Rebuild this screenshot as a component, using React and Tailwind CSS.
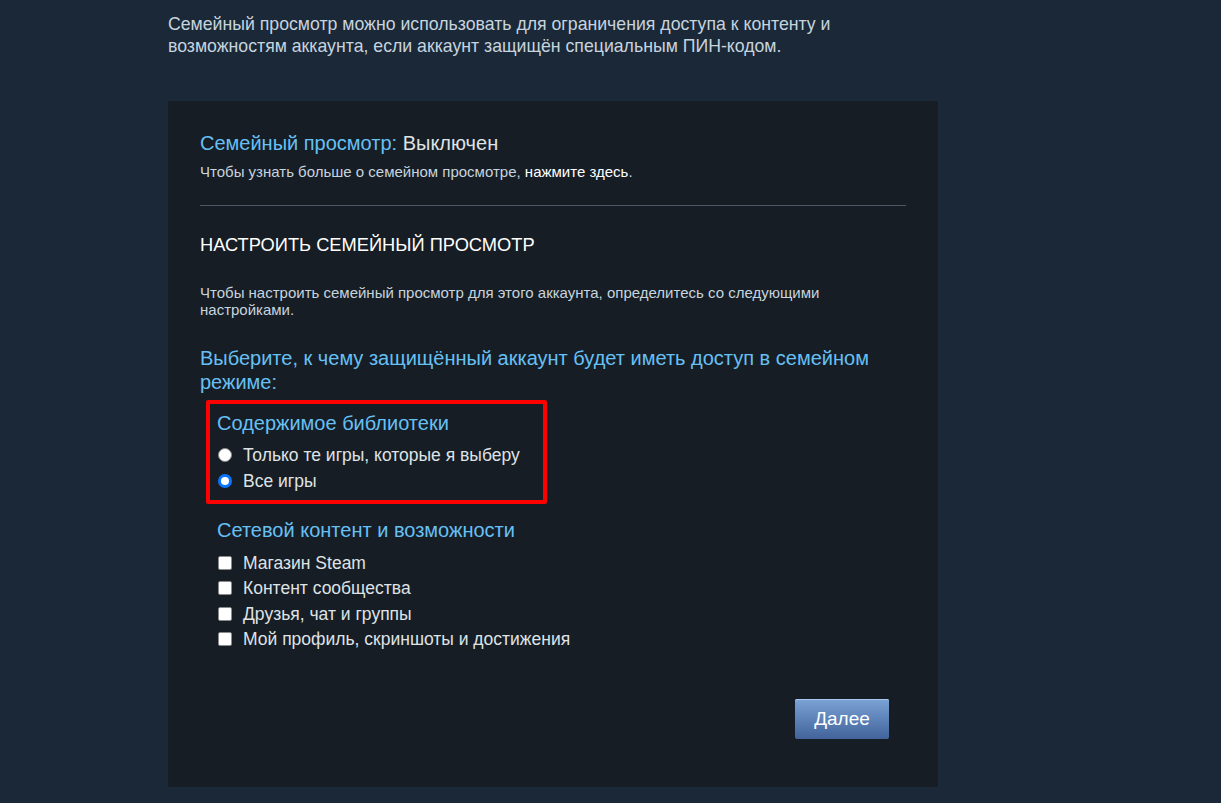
import React from "react";

const Radio = ({ checked, label }) => (
  <label className="flex items-center h-[26px] text-[17.5px] text-[#dfe3e6]">
    {checked ? (
      <span className="w-[14px] h-[14px] rounded-full bg-white border-[3px] border-[#0a75ff] ml-[1px] mr-[11px]" />
    ) : (
      <span className="w-[14px] h-[14px] rounded-full bg-white border border-[#8a8a8a] ml-[1px] mr-[11px]" />
    )}
    {label}
  </label>
);

const Check = ({ label }) => (
  <label className="flex items-center h-[25.5px] text-[17.5px] text-[#dfe3e6]">
    <span className="w-[14px] h-[14px] rounded-[2px] bg-white border border-[#8a8a8a] ml-[1px] mr-[11px]" />
    {label}
  </label>
);

export default function App() {
  return (
    <div className="min-h-[803px] bg-[#1b2838] font-['Liberation_Sans',Arial,sans-serif]">
      <div className="pl-[168px] pt-[13px]">
        <p className="w-[700px] text-[17.7px] leading-[22px] text-[#c6d4df]">
          Семейный просмотр можно использовать для ограничения доступа к контенту и
          возможностям аккаунта, если аккаунт защищён специальным ПИН-кодом.
        </p>

        <div className="mt-[44px] w-[770px] h-[686px] bg-[#171d25] px-[32px] pt-[30px]">
          <div className="text-[20px] leading-[24px]">
            <span className="text-[#66c0f4]">Семейный просмотр: </span>
            <span className="text-[#dfe3e6]">Выключен</span>
          </div>
          <p className="mt-[8px] text-[15px] leading-[18px] text-[#c6d4df]">
            Чтобы узнать больше о семейном просмотре, <span className="text-white">нажмите здесь</span>.
          </p>

          <div className="mt-[24px] h-px bg-[#4c5866]" />

          <h2 className="mt-[28px] text-[18.3px] leading-[22px] text-white uppercase">
            Настроить семейный просмотр
          </h2>

          <p className="mt-[28px] w-[660px] text-[15px] leading-[17px] text-[#c6d4df]">
            Чтобы настроить семейный просмотр для этого аккаунта, определитесь со следующими настройками.
          </p>

          <p className="mt-[28px] w-[690px] text-[20px] leading-[24px] text-[#66c0f4]">
            Выберите, к чему защищённый аккаунт будет иметь доступ в семейном режиме:
          </p>

          <div className="mt-[6px] ml-[6px] w-[341px] border-4 border-[#ff0000] rounded-[2px] pl-[7px] pt-[7px] pb-[6px]">
            <div className="text-[20px] leading-[24px] text-[#66c0f4] mb-[7px]">Содержимое библиотеки</div>
            <Radio label="Только те игры, которые я выберу" />
            <Radio checked label="Все игры" />
          </div>

          <div className="ml-[17px] mt-[14px]">
            <div className="text-[20px] leading-[24px] text-[#66c0f4] mb-[8px]">Сетевой контент и возможности</div>
            <Check label="Магазин Steam" />
            <Check label="Контент сообщества" />
            <Check label="Друзья, чат и группы" />
            <Check label="Мой профиль, скриншоты и достижения" />
          </div>

          <div className="flex justify-end mt-[47px] pr-[17px]">
            <button className="w-[94px] h-[40px] rounded-[2px] bg-gradient-to-b from-[#7ba3d6] to-[#42639b] text-white text-[19px] shadow-[inset_0_1px_0_#a9c6ec]">
              Далее
            </button>
          </div>
        </div>
      </div>
    </div>
  );
}
